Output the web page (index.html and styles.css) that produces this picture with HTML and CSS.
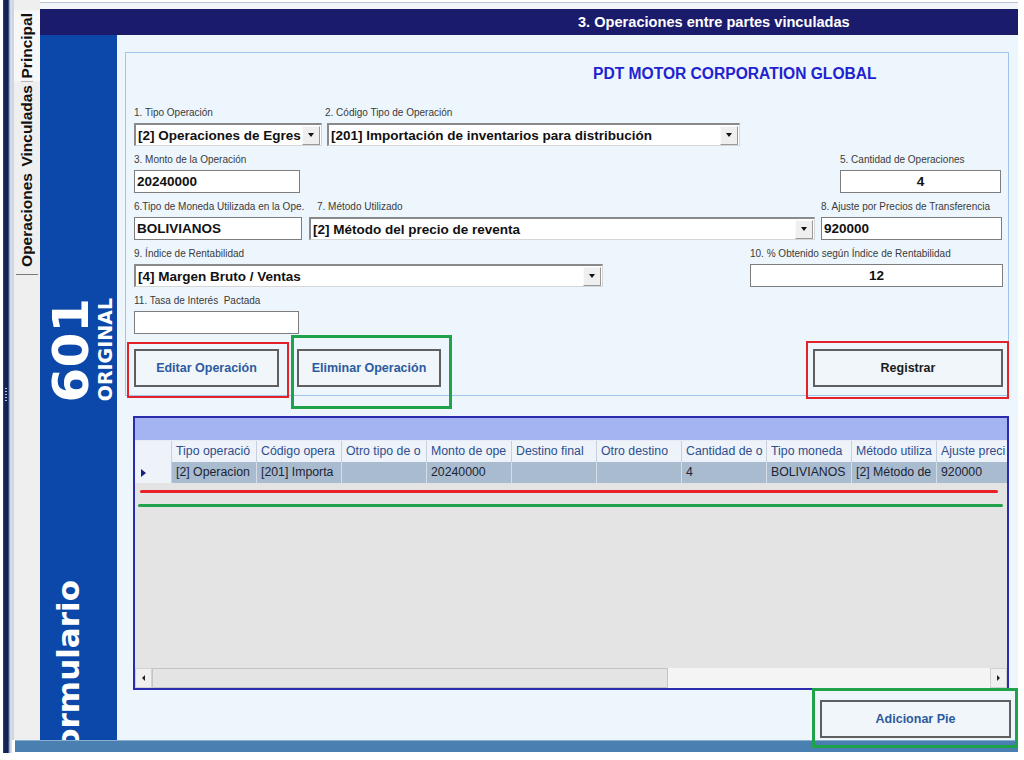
FILE: index.html
```html
<!DOCTYPE html>
<html lang="es">
<head>
<meta charset="utf-8">
<title>Formulario 601 - Operaciones entre partes vinculadas</title>
<link rel="stylesheet" href="styles.css">
</head>
<body>
<div class="app">
  <div class="edge"><span class="grip"></span></div>
  <div class="shell">
    <div class="shell-main">
      <nav class="tabs">
        <span class="tab tab-active">Principal</span>
        <span class="tab-sep"></span>
        <span class="tab">Vinculadas</span>
        <span class="tab">Operaciones</span>
        <span class="tab-sep tab-sep-wide"></span>
      </nav>
      <div class="main">
        <div class="topline"></div>
        <header class="titlebar">3. Operaciones entre partes vinculadas</header>
        <div class="body">
          <aside class="brand">
            <div class="brand-code">
              <span class="vtext brand-num">601</span>
              <span class="vtext brand-ed">ORIGINAL</span>
            </div>
            <span class="vtext brand-name">Formulario</span>
          </aside>

          <section class="content">
            <div class="groupbox">
              <div class="company">PDT MOTOR CORPORATION GLOBAL</div>

              <div class="rows">
                <div class="row">
                  <div class="field w-188">
                    <span class="label">1. Tipo Operación</span>
                    <div class="combo"><span class="combo-text">[2] Operaciones de Egres</span><span class="combo-btn"></span></div>
                  </div>
                  <div class="field w-413 ml-5">
                    <span class="label shift-l2">2. Código Tipo de Operación</span>
                    <div class="combo"><span class="combo-text">[201] Importación de inventarios para distribución</span><span class="combo-btn"></span></div>
                  </div>
                </div>

                <div class="row">
                  <div class="field w-166">
                    <span class="label">3. Monto de la Operación</span>
                    <div class="input">20240000</div>
                  </div>
                  <div class="field w-161 push mr-2">
                    <span class="label">5. Cantidad de Operaciones</span>
                    <div class="input centered">4</div>
                  </div>
                </div>

                <div class="row">
                  <div class="field w-168">
                    <span class="label">6.Tipo de Moneda Utilizada en la Ope.</span>
                    <div class="input">BOLIVIANOS</div>
                  </div>
                  <div class="field w-506 ml-7">
                    <span class="label shift-r8">7. Método Utilizado</span>
                    <div class="combo"><span class="combo-text">[2] Método del precio de reventa</span><span class="combo-btn"></span></div>
                  </div>
                  <div class="field w-181 ml-6">
                    <span class="label">8. Ajuste por Precios de Transferencia</span>
                    <div class="input">920000</div>
                  </div>
                </div>

                <div class="row">
                  <div class="field w-469">
                    <span class="label">9. Índice de Rentabilidad</span>
                    <div class="combo"><span class="combo-text">[4] Margen Bruto / Ventas</span><span class="combo-btn"></span></div>
                  </div>
                  <div class="field w-253 push">
                    <span class="label">10. % Obtenido según Índice de Rentabilidad</span>
                    <div class="input centered">12</div>
                  </div>
                </div>

                <div class="row">
                  <div class="field w-165">
                    <span class="label">11. Tasa de Interés&nbsp; Pactada</span>
                    <div class="input"></div>
                  </div>
                </div>
              </div>

              <div class="actions">
                <div class="btn-wrap w-145">
                  <div class="btn">Editar Operación</div>
                  <span class="mark mark-red mark-edit"></span>
                </div>
                <div class="btn-wrap w-144 ml-18">
                  <div class="btn">Eliminar Operación</div>
                  <span class="mark mark-green mark-delete"></span>
                </div>
                <div class="btn-wrap w-190 push">
                  <div class="btn btn-dark">Registrar</div>
                  <span class="mark mark-red mark-save"></span>
                </div>
              </div>
            </div>

            <div class="grid">
              <div class="grid-band"></div>
              <div class="grid-head">
                <span class="cell rowhead"></span>
                <span class="cell">Tipo operació</span>
                <span class="cell">Código opera</span>
                <span class="cell">Otro tipo de o</span>
                <span class="cell">Monto de ope</span>
                <span class="cell">Destino final</span>
                <span class="cell">Otro destino</span>
                <span class="cell">Cantidad de o</span>
                <span class="cell">Tipo moneda</span>
                <span class="cell">Método utiliza</span>
                <span class="cell cell-last">Ajuste preci</span>
              </div>
              <div class="grid-row">
                <span class="cell rowhead"><span class="row-pointer"></span></span>
                <span class="cell">[2] Operacion</span>
                <span class="cell">[201] Importa</span>
                <span class="cell"></span>
                <span class="cell">20240000</span>
                <span class="cell"></span>
                <span class="cell"></span>
                <span class="cell">4</span>
                <span class="cell">BOLIVIANOS</span>
                <span class="cell">[2] Método de</span>
                <span class="cell cell-last">920000</span>
              </div>
              <div class="grid-empty">
                <div class="stroke stroke-red"></div>
                <div class="stroke stroke-green"></div>
              </div>
              <div class="scrollbar">
                <span class="sb-arrow sb-left"></span>
                <span class="sb-thumb"></span>
                <span class="sb-track"></span>
                <span class="sb-arrow sb-right"></span>
              </div>
            </div>

            <div class="footer-actions">
              <div class="btn-wrap w-191">
                <div class="btn">Adicionar Pie</div>
                <span class="mark mark-green mark-foot"></span>
              </div>
            </div>
          </section>
        </div>
      </div>
    </div>
    <div class="statusbar"></div>
  </div>
</div>
</body>
</html>
```

FILE: styles.css
```css
* { box-sizing: border-box; }

html, body {
  margin: 0;
  padding: 0;
  background: #ffffff;
}

body {
  width: 1024px;
  height: 760px;
  overflow: hidden;
  font-family: "Liberation Sans", Arial, sans-serif;
  color: #111;
}

/* window frame */
.app {
  display: flex;
  height: 753px;
  padding-left: 3px;
}

.edge {
  flex: none;
  width: 9px;
  background: linear-gradient(to right, #44557f 0, #17275c 1px, #0f1f52 5px, #6b7ca3 6px, #c7d1e0 7px, #dfe5ee 9px);
}

.grip {
  display: block;
  width: 2px;
  height: 14px;
  margin: 388px 0 0 2px;
  background: repeating-linear-gradient(#b8c2d6 0 1px, transparent 1px 3px);
}

.shell {
  flex: none;
  width: 1006px;
  min-width: 0;
  display: flex;
  flex-direction: column;
}

.shell-main {
  display: flex;
  height: 740px;
  min-width: 0;
}

/* vertical tab strip */
.tabs {
  flex: none;
  width: 28px;
  background: #efefef;
  border-left: 2px solid #cfd6e0;
  display: flex;
  flex-direction: column;
  align-items: center;
  padding-top: 10px;
}

.tab {
  writing-mode: vertical-rl;
  transform: rotate(180deg);
  font: bold 15.5px/26px "Liberation Sans", Arial, sans-serif;
  color: #111;
  padding: 3px 0;
  white-space: nowrap;
}

.tab-active {
  background: #f7f7f7;
}

.tab-sep {
  width: 12px;
  height: 1px;
  background: #7a7a7a;
  flex: none;
}

.tab-sep-wide {
  width: 22px;
  margin-top: 4px;
}

/* main area */
.main {
  flex: 1;
  min-width: 0;
  display: flex;
  flex-direction: column;
}

.topline {
  height: 9px;
  background: linear-gradient(#ffffff 0 2px, #b8c6d8 2px 3px, #f1f4f8 3px);
}

.titlebar {
  height: 26px;
  background: #1b1b6c;
  color: #ffffff;
  font: bold 14.6px/26px "Liberation Sans", Arial, sans-serif;
  padding-left: 538px;
  white-space: nowrap;
  overflow: hidden;
}

.body {
  display: flex;
  height: 705px;
  min-width: 0;
}

/* form brand column */
.brand {
  flex: none;
  width: 77px;
  background: #0b48a9;
  color: #ffffff;
  display: flex;
  flex-direction: column;
  overflow: hidden;
}

.vtext {
  writing-mode: vertical-rl;
  transform: rotate(180deg);
  white-space: nowrap;
  flex: none;
}

.brand-code {
  display: flex;
  align-items: flex-start;
  margin-top: 263px;
  padding-left: 6px;
}

.brand-num {
  font: bold 50px/50px "DejaVu Sans", Verdana, sans-serif;
}

.brand-ed {
  font: bold 19px/19px "DejaVu Sans", Verdana, sans-serif;
}

.brand-name {
  font: bold 31px/31px "DejaVu Sans", Verdana, sans-serif;
  margin-top: 178px;
  margin-left: 13px;
  align-self: flex-start;
}

/* content */
.content {
  flex: 1;
  min-width: 0;
  background: #eef6fd;
  padding: 17px 9px 0 8px;
  display: flex;
  flex-direction: column;
}

.groupbox {
  border: 1px solid #9fc5ec;
  padding: 0 5px 8px 8px;
}

.company {
  margin-top: 12px;
  padding-left: 459px;
  font: bold 15.6px/18px "Liberation Sans", Arial, sans-serif;
  color: #1f23cf;
  white-space: nowrap;
}

.rows {
  margin-top: 23px;
  display: flex;
  flex-direction: column;
  gap: 7px;
}

.row {
  display: flex;
  height: 40px;
}

.field {
  flex: none;
  display: flex;
  flex-direction: column;
}

.label {
  height: 14px;
  margin-bottom: 3px;
  font-size: 10px;
  line-height: 14px;
  color: #3a3a3a;
  white-space: nowrap;
}

.shift-l2 { margin-left: -2px; }
.shift-r8 { padding-left: 8px; }

.input {
  height: 23px;
  background: #ffffff;
  border: 1px solid #7d7d7d;
  padding-left: 2px;
  font: bold 13.5px/21px "Liberation Sans", Arial, sans-serif;
  color: #111;
  white-space: nowrap;
  overflow: hidden;
}

.input.centered {
  text-align: center;
  padding-left: 0;
}

.combo {
  height: 23px;
  display: flex;
  align-items: center;
  background: #ffffff;
  border-style: solid;
  border-width: 2px 1px 1px 2px;
  border-color: #8a8a8a #d6d6d6 #d6d6d6 #8a8a8a;
  font: bold 13.5px "Liberation Sans", Arial, sans-serif;
}

.combo-text {
  flex: 1;
  padding-left: 2px;
  white-space: nowrap;
  overflow: hidden;
}

.combo-btn {
  flex: none;
  width: 18px;
  height: 19px;
  margin-right: 1px;
  background: #efefef;
  border: 1px solid;
  border-color: #fafafa #999999 #999999 #fafafa;
  display: flex;
  align-items: center;
  justify-content: center;
}

.combo-btn::before {
  content: "";
  border-left: 3.5px solid transparent;
  border-right: 3.5px solid transparent;
  border-top: 4px solid #111;
}

/* widths and spacing */
.w-144 { width: 144px; }
.w-145 { width: 145px; }
.w-161 { width: 161px; }
.w-165 { width: 165px; }
.w-166 { width: 166px; }
.w-168 { width: 168px; }
.w-181 { width: 181px; }
.w-188 { width: 188px; }
.w-190 { width: 190px; }
.w-191 { width: 191px; }
.w-253 { width: 253px; }
.w-413 { width: 413px; }
.w-469 { width: 469px; }
.w-506 { width: 506px; }
.ml-5 { margin-left: 5px; }
.ml-6 { margin-left: 6px; }
.ml-7 { margin-left: 7px; }
.ml-18 { margin-left: 18px; }
.mr-2 { margin-right: 2px; }
.push { margin-left: auto; }

/* buttons */
.actions {
  display: flex;
  margin-top: 15px;
  height: 38px;
}

.btn-wrap {
  position: relative;
  flex: none;
}

.btn {
  height: 38px;
  display: flex;
  align-items: center;
  justify-content: center;
  border: 2px solid #5f5f5f;
  background: #f1f6fb;
  font: bold 12.5px "Liberation Sans", Arial, sans-serif;
  color: #2c5a9e;
  white-space: nowrap;
}

.btn-dark { color: #1c1c1c; }

/* highlight rectangles drawn over the buttons */
.mark {
  position: absolute;
  pointer-events: none;
}

.mark-red { border: 2.5px solid #e4222a; }
.mark-green { border: 3px solid #1ea34b; }

.mark-edit { left: -7px; right: -10px; top: -7px; bottom: -11px; }
.mark-delete { left: -6px; right: -11px; top: -14px; bottom: -22px; }
.mark-save { left: -7px; right: -6px; top: -8px; bottom: -12px; }
.mark-foot { left: -8px; right: -7px; top: -12px; bottom: -10px; }

/* data grid */
.grid {
  margin: 20px 0 0 8px;
  min-width: 0;
  border: 2px solid #2b2bae;
  display: flex;
  flex-direction: column;
}

.grid-band {
  height: 22px;
  background: #a4b4f2;
}

.grid-head,
.grid-row {
  display: flex;
  overflow: hidden;
  min-width: 0;
}

.grid-head {
  height: 22px;
  border-top: 1px solid #e6ebf6;
  background: #eef2f9;
}

.grid-row {
  height: 21px;
}

.cell {
  flex: none;
  width: 85px;
  padding-left: 4px;
  border-right: 1px solid #c6d0de;
  font-size: 12.3px;
  line-height: 21px;
  white-space: nowrap;
  overflow: hidden;
}

.cell-last {
  flex: 1 1 auto;
  width: auto;
  min-width: 0;
  border-right: 0;
}

.grid-head .cell {
  color: #2d4f8e;
}

.grid-row .cell {
  background: #a9bbcf;
  color: #1b2433;
  border-right-color: #d6dde6;
}

.cell.rowhead {
  width: 37px;
  padding-left: 0;
}

.grid-row .cell.rowhead {
  background: #eef2f9;
  border-right-color: #c6d0de;
  display: flex;
  align-items: center;
  padding-left: 6px;
}

.row-pointer {
  width: 0;
  height: 0;
  border-top: 4px solid transparent;
  border-bottom: 4px solid transparent;
  border-left: 5px solid #16227a;
}

.grid-empty {
  height: 185px;
  background: #e4e4e4;
  padding-top: 7px;
}

.stroke {
  height: 3px;
  border-radius: 2px;
}

.stroke-red {
  margin-left: 5px;
  width: 858px;
  background: #e8222a;
}

.stroke-green {
  margin-top: 11px;
  margin-left: 3px;
  width: 865px;
  background: #21a24c;
}

.scrollbar {
  height: 20px;
  display: flex;
  background: #f4f4f4;
}

.sb-arrow {
  flex: none;
  width: 17px;
  background: #f0f0f0;
  border: 1px solid #d2d2d2;
  display: flex;
  align-items: center;
  justify-content: center;
}

.sb-left::before {
  content: "";
  border-top: 3px solid transparent;
  border-bottom: 3px solid transparent;
  border-right: 3px solid #222;
}

.sb-right::before {
  content: "";
  border-top: 3px solid transparent;
  border-bottom: 3px solid transparent;
  border-left: 3px solid #222;
}

.sb-thumb {
  flex: none;
  width: 516px;
  background: #e4e4e4;
  border: 1px solid #c4c4c4;
}

.sb-track {
  flex: 1;
}

.footer-actions {
  display: flex;
  justify-content: flex-end;
  margin-top: 10px;
  margin-right: -2px;
}

.statusbar {
  height: 12px;
  margin-left: 3px;
  background: #4a7fb1;
  border-top: 1px solid #8aaed0;
}
```
